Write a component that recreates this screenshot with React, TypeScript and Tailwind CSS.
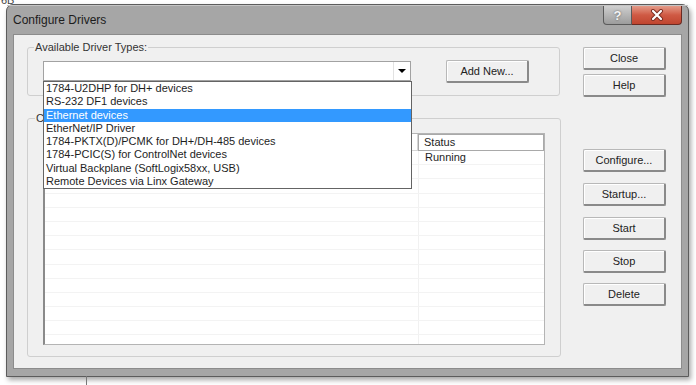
import React from 'react';

const driverTypes = [
  '1784-U2DHP for DH+ devices',
  'RS-232 DF1 devices',
  'Ethernet devices',
  'EtherNet/IP Driver',
  '1784-PKTX(D)/PCMK for DH+/DH-485 devices',
  '1784-PCIC(S) for ControlNet devices',
  'Virtual Backplane (SoftLogix58xx, USB)',
  'Remote Devices via Linx Gateway',
];

const rows = Array.from({ length: 14 }, (_, i) => i);

function DlgButton({ label, className = '' }: { label: string; className?: string }) {
  return (
    <button
      className={`h-[23px] w-[83px] rounded-[2px] border border-[#b8b8b8] border-b-2 border-r-2 border-b-[#8a8a8a] border-r-[#8a8a8a] bg-[#f0f0f0] text-[11px] leading-none text-[#222] shadow-[inset_1px_1px_0_#fff] ${className}`}
    >
      {label}
    </button>
  );
}

export default function App() {
  return (
    <div className="relative h-[385px] w-[696px] overflow-hidden bg-white font-['Liberation_Sans',Arial,sans-serif] text-[#1e1e1e]">
      {/* bits of the desktop behind the dialog */}
      <span className="absolute left-[1px] top-[-8px] text-[11px] text-[#444]">6B</span>
      <div className="absolute left-[86px] top-[376px] h-[10px] w-px bg-[#777]" />

      {/* window */}
      <div className="ml-[6px] mt-[4px] flex h-[373px] w-[683px] flex-col rounded-t-[7px] border border-[#5c5c5c] bg-[#a6a6a6] shadow-[2px_3px_5px_rgba(0,0,0,0.35)]">
        {/* title bar */}
        <div className="flex h-[29px] items-start justify-between border-t border-[#c4c4c4] pl-[6px] pr-[6px]">
          <span className="mt-[7px] text-[12px] leading-[14px] text-[#1c1c1c]">Configure Drivers</span>
          <div className="flex">
            <div className="flex h-[19px] w-[29px] items-center justify-center rounded-bl-[4px] border border-t-0 border-[#5a5a5a] bg-gradient-to-b from-[#cfcfcf] to-[#9c9c9c] text-[13px] font-bold leading-none text-[#f4f4f4] [text-shadow:0_0_2px_#555]">
              ?
            </div>
            <div className="flex h-[19px] w-[50px] items-center justify-center rounded-br-[4px] border border-l-0 border-t-0 border-[#6a2a22] bg-gradient-to-b from-[#e39a88] via-[#cf5a44] to-[#c0452f]">
              <svg width="14" height="12" viewBox="0 0 14 12">
                <path d="M3 2 L11 10 M11 2 L3 10" stroke="#7a2a1e" strokeWidth="4" strokeLinecap="round" />
                <path d="M3 2 L11 10 M11 2 L3 10" stroke="#ffffff" strokeWidth="2.2" strokeLinecap="round" />
              </svg>
            </div>
          </div>
        </div>

        {/* client area */}
        <div className="mx-[6px] mb-[7px] flex h-[335px] border border-[#8c8c8c] bg-[#f0f0f0] pl-[13px] pt-[5px]">
          {/* left column */}
          <div className="flex w-[533px] flex-col">
            <fieldset className="h-[56px] rounded-[3px] border border-[#cfcfcf] px-[15px]">
              <legend className="-ml-[9px] px-[1px] text-[11px] leading-[14px] text-[#333]">Available Driver Types:</legend>
              <div className="mt-[7px] flex items-start">
                <div className="relative z-10 flex h-[20px] w-[368px] border border-[#a2a2a2] bg-white">
                  <div className="flex-1" />
                  <div className="flex w-[17px] items-center justify-center border-l border-[#e2e2e2]">
                    <div className="h-0 w-0 border-x-[4px] border-t-[4px] border-x-transparent border-t-black" />
                  </div>
                  {/* open drop-down list */}
                  <div className="absolute left-[-1px] top-[19px] w-[369px] border border-[#646464] bg-white">
                    {driverTypes.map((d) => (
                      <div
                        key={d}
                        className={`h-[13.25px] whitespace-nowrap pl-[2px] text-[11px] leading-[13.25px] ${
                          d === 'Ethernet devices' ? 'bg-[#3399ff] text-white' : 'text-[#1e1e1e]'
                        }`}
                      >
                        {d}
                      </div>
                    ))}
                  </div>
                </div>
                <DlgButton label="Add New..." className="ml-[35px] mt-[-1px] h-[22px] w-[83px]" />
              </div>
            </fieldset>

            <fieldset className="mt-[15px] h-[246px] rounded-[3px] border border-[#cfcfcf] px-[15px]">
              <legend className="-ml-[8px] px-[1px] text-[11px] leading-[14px] text-[#333]">Configured Drivers:</legend>
              <div className="mt-[8px] h-[212px] w-[502px] overflow-hidden border border-[#b4b4b4] border-l-2 border-l-[#8a8a8a] bg-white">
                <div className="flex h-[17px] text-[11px] leading-[15px]">
                  <div className="w-[373px] border-b border-r border-[#d5d5d5]" />
                  <div className="flex-1 border border-[#a9a9a9] pl-[5px]">Status</div>
                </div>
                {rows.map((r) => (
                  <div key={r} className="flex h-[14.2px] border-b border-[#f3f3f3] text-[11px] leading-[13px]">
                    <div className="w-[374px] border-r border-[#f1f1f1]" />
                    <div className="flex-1 pl-[6px]">{r === 0 ? 'Running' : ''}</div>
                  </div>
                ))}
              </div>
            </fieldset>
          </div>

          {/* right column buttons */}
          <div className="ml-[23px] flex flex-col pt-[7px]">
            <DlgButton label="Close" />
            <DlgButton label="Help" className="mt-[4px]" />
            <DlgButton label="Configure..." className="mt-[52px]" />
            <DlgButton label="Startup..." className="mt-[11px]" />
            <DlgButton label="Start" className="mt-[11px]" />
            <DlgButton label="Stop" className="mt-[10px]" />
            <DlgButton label="Delete" className="mt-[10px]" />
          </div>
        </div>
      </div>

      {/* mouse pointer */}
      <svg className="absolute left-[155px] top-[112px]" width="13" height="20" viewBox="0 0 13 20">
        <path d="M1 1 L1 16 L4.5 12.5 L7 18.5 L9.2 17.6 L6.8 11.8 L11.5 11.8 Z" fill="#fff" stroke="#000" strokeWidth="1" strokeLinejoin="round" />
      </svg>
    </div>
  );
}
